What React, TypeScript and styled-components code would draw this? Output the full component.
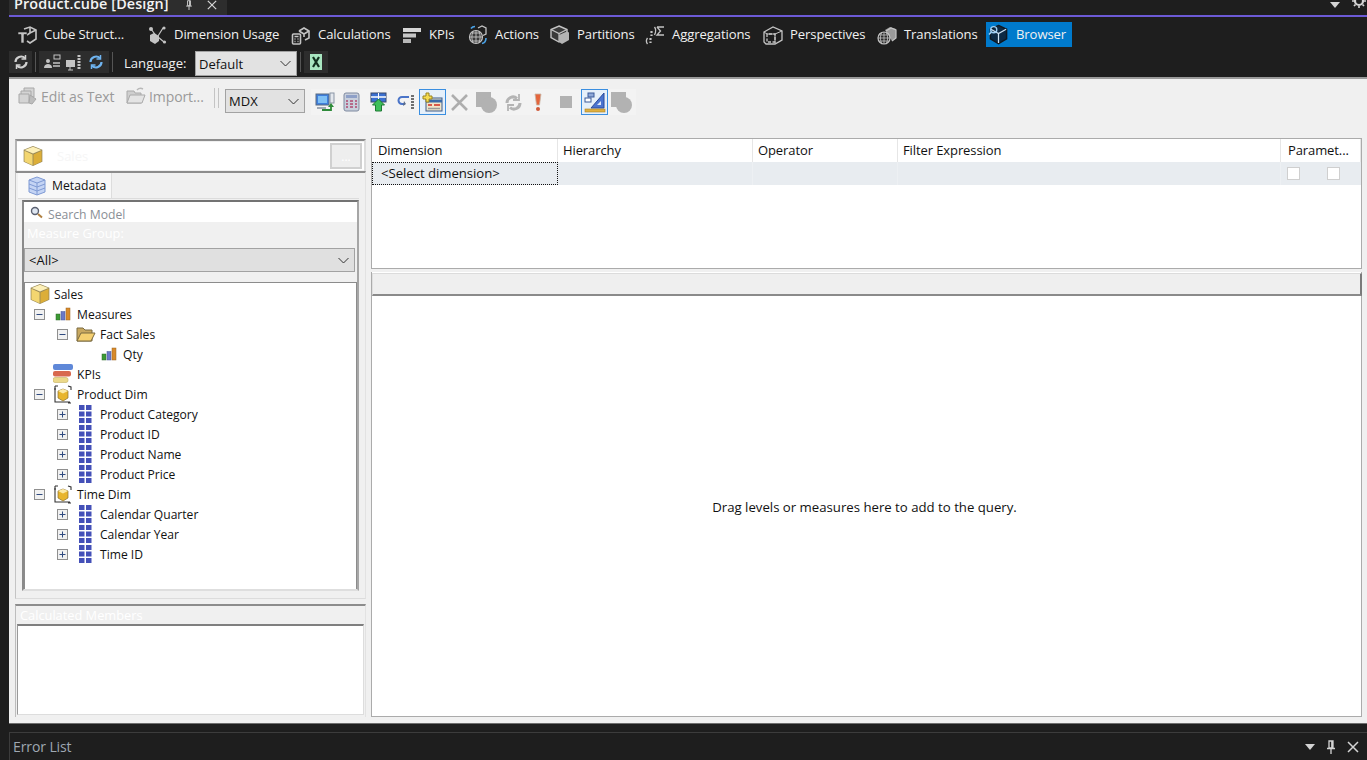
import React from "react";
import styled, { createGlobalStyle } from "styled-components";

const Global = createGlobalStyle`
  html, body { margin: 0; padding: 0; background: #1e1e1e; overflow: hidden; }
  #root { width: 1367px; height: 760px; }
  * { box-sizing: border-box; }
`;
const FONT = `"Open Sans", "Noto Sans", sans-serif`;

const Page = styled.div`
  width: 1367px; height: 760px; overflow: hidden; background: #1e1e1e; color: #fff;
  display: flex; flex-direction: column; font-family: ${FONT}; font-size: 13px;
`;
const TopBar = styled.div`
  height: 15px; flex: none; display: flex; justify-content: space-between; padding-left: 9px; overflow: hidden;
`;
const DocTab = styled.div`
  width: 218px; height: 15px; background: #2d2d2d; display: flex; align-items: flex-start; padding-left: 5px; gap: 13px;
`;
const DocTitle = styled.span`
  font-size: 14.4px; font-weight: 600; line-height: 14px; margin-top: -3px; width: 157px; white-space: nowrap; letter-spacing: .1px; color: #f4f4f4;
`;
const TopIcons = styled.div`
  display: flex; align-items: flex-start; gap: 12px; padding: 2px 1px 0 0;
`;
const AccentLine = styled.div`
  height: 2px; flex: none; margin-left: 9px; background: #6c5ad6;
`;
const DesignerTabs = styled.div`
  height: 34px; flex: none; display: flex; align-items: flex-start; padding: 5px 0 0 15px;
`;
const DesignerTab = styled.div<{ $w: number; $active?: boolean }>`
  width: ${p => p.$w}px; flex: none; height: 25px; display: flex; align-items: center; padding-left: 2px; gap: 7px;
  background: ${p => (p.$active ? "#007acc" : "transparent")}; font-size: 13.1px; white-space: nowrap; letter-spacing: -.1px; color: #f1f1f1;
  span { position: relative; top: -1px; }
`;
const ToolRow = styled.div`
  height: 26px; flex: none; display: flex; align-items: flex-start; padding-left: 9px; gap: 3px;
`;
const DarkGroup = styled.div<{ $w: number }>`
  height: 22px; background: #2d2d2d; display: flex; align-items: center; justify-content: space-around; padding: 0 2px; flex: none;
  width: ${p => p.$w}px;
`;
const DarkSep = styled.div`
  width: 1px; height: 20px; margin-top: 1px; background: #555; flex: none;
`;
const LangLabel = styled.span`
  font-size: 13.1px; margin-left: 8px; width: 68px; flex: none; line-height: 24px; color: #f1f1f1;
`;
const ComboBox = styled.div<{ $w: number; $h: number; $bg?: string }>`
  width: ${p => p.$w}px; height: ${p => p.$h}px; flex: none; display: flex; align-items: center; justify-content: space-between;
  background: ${p => p.$bg || "#e2e2e2"}; border: 1px solid #a2a2a2; color: #111; padding: 0 5px 0 3px; font-size: 13px;
`;
const QueryCombo = styled(ComboBox)`
  margin: 3px 0 0 3px;
`;
const MeasureCombo = styled(ComboBox)`
  padding-left: 4px;
`;
const Designer = styled.div`
  height: 647px; flex: none; margin-left: 9px; background: #f0f0f0; border-top: 2px solid #9a9a9a; border-bottom: 1px solid #6e6e6e;
  display: flex; flex-direction: column;
`;
const QueryBar = styled.div`
  height: 59px; flex: none; display: flex; align-items: flex-start; padding: 7px 0 0 9px; color: #9a9a9a; font-size: 14px;
`;
const QueryButton = styled.div<{ $w: number }>`
  width: ${p => p.$w}px; height: 20px; display: flex; align-items: center; gap: 3px; flex: none; white-space: nowrap; letter-spacing: -.1px;
`;
const GripLine = styled.div`
  width: 1px; height: 20px; margin: 2px 3px 0 0; background: #c4c4c4; flex: none;
`;
const IconStrip = styled.div`
  margin: 3px 0 0 6px; height: 26px; width: 325px; flex: none; display: flex; align-items: center; background: #f3f3f3;
`;
const StripSlot = styled.div<{ $w: number; $on?: boolean }>`
  width: ${p => p.$w}px; height: 26px; flex: none; display: flex; align-items: center; justify-content: center;
  border: ${p => (p.$on ? "1px solid #3a8ee0" : "none")}; background: ${p => (p.$on ? "#e6f0fa" : "transparent")};
`;
const Split = styled.div`
  flex: 1; display: grid; grid-template-columns: 351px 991px; column-gap: 5px; padding: 0 5px 6px 6px; min-height: 0;
`;
const LeftCol = styled.div`
  display: flex; flex-direction: column; gap: 5px;
`;
const LeftTop = styled.div`
  display: flex; flex-direction: column; flex: none;
`;
const RightCol = styled.div`
  display: flex; flex-direction: column; gap: 3px;
`;
const CubeBar = styled.div`
  margin-top: 1px; height: 32px; flex: none; border-top: 2px solid #8c8c8c; border-left: 2px solid #b4b4b4; border-right: 2px solid #dcdcdc; padding-bottom: 2px;
`;
const CubeField = styled.div`
  height: 28px; margin-top: 1px; background: #fff; display: flex; align-items: center; padding: 0 2px 0 5px;
`;
const CubeName = styled.span`
  color: #f6f6f6; margin-left: 13px; flex: 1; font-size: 13px;
`;
const DotsButton = styled.div`
  width: 32px; height: 26px; background: #eeeeee; border: 2px solid #d0d0d0; color: #fff; text-align: center; line-height: 24px; font-size: 12px;
`;
const MetaPanel = styled.div`
  height: 428px; flex: none; border-top: 2px solid #8c8c8c; border-left: 1px solid #c4c4c4; border-right: 1px solid #e2e2e2; border-bottom: 1px solid #dcdcdc;
  display: flex; flex-direction: column; padding: 0 6px 0 2px;
`;
const MetaTab = styled.div`
  width: 94px; height: 25px; flex: none; background: #f8f8f8; border-right: 1px solid #ddd; display: flex; align-items: center; gap: 5px; padding-left: 9px; color: #111; font-size: 12.2px;
`;
const MetaRule = styled.div`
  height: 1px; flex: none; background: #dcdcdc;
`;
const MetaBody = styled.div`
  margin: 1px 0 0 4px; height: 391px; flex: none; border-top: 2px solid #737373; border-left: 2px solid #8a8a8a; border-right: 2px solid #a6a6a6; border-bottom: 2px solid #dedede;
  display: flex; flex-direction: column;
`;
const SearchRow = styled.div`
  height: 20px; flex: none; background: #fff; display: flex; align-items: center; padding: 0 0 0 6px; gap: 5px; color: #8a8f96; font-size: 12.2px;
  span { position: relative; top: 2px; }
`;
const GhostLabel = styled.div`
  color: #fff; font-size: 12.8px; line-height: 22px; white-space: nowrap; overflow: hidden;
`;
const GroupLabel = styled(GhostLabel)`
  height: 26px; padding: 0 0 0 3px; flex: none;
`;
const Tree = styled.div`
  margin-top: 10px; flex: 1; background: #fff; border: 1px solid #8c8c8c; border-bottom: none; padding-top: 1px; min-height: 0; color: #111;
`;
const TreeRow = styled.div<{ $level: number }>`
  height: 20px; display: flex; align-items: center; font-size: 12.1px; padding-left: ${p => (p.$level === 0 ? 4 : 9 + 23 * (p.$level - 1))}px;
`;
const ExpanderSlot = styled.div`
  width: 18px; flex: none; display: flex; align-items: center;
`;
const TreeIconSlot = styled.div`
  width: 21px; flex: none; display: flex; align-items: center; justify-content: center; margin-right: 4px;
`;
const CalcPanel = styled.div`
  flex: 1; border-top: 2px solid #8c8c8c; border-left: 1px solid #bdbdbd; border-right: 1px solid #e2e2e2; display: flex; flex-direction: column; padding: 0 1px 2px 1px;
`;
const CalcLabel = styled(GhostLabel)`
  height: 18px; flex: none; padding-left: 3px; line-height: 18px;
`;
const CalcBox = styled.div`
  flex: 1; background: #fff; border-top: 2px solid #7f7f7f; border-left: 1px solid #9a9a9a; border-right: 1px solid #ddd; border-bottom: 1px solid #ddd;
`;
const FilterPanel = styled.div`
  height: 131px; flex: none; background: #fff; border: 1px solid #ababab;
`;
const FilterGrid = styled.div`
  display: grid; grid-template-columns: 186px 195px 145px 383px 80px; grid-template-rows: 23px 23px;
`;
const HeadCell = styled.div<{ $pad?: number }>`
  border-right: 1px solid #e6e6e6; padding-left: ${p => p.$pad ?? 5}px; line-height: 22px; color: #111; font-size: 13px; white-space: nowrap; letter-spacing: -.1px;
`;
const RowCell = styled.div`
  background: #e8ecf0; border-right: 1px solid #edf0f3;
`;
const SelectedCell = styled.div`
  background: #e8ecf0; border: 1px dotted #111; padding-left: 8px; line-height: 21px; color: #111; font-size: 13.2px; white-space: nowrap; letter-spacing: -.05px;
`;
const CheckCell = styled(RowCell)`
  display: flex; align-items: center; padding-left: 6px; gap: 27px; border-right: none;
`;
const TinyCheck = styled.div`
  width: 13px; height: 13px; background: #fff; border: 1px solid #cfcfcf;
`;
const ResultPanel = styled.div`
  height: 445px; flex: none; background: #fff; border: 1px solid #ababab; border-top: none; display: flex; flex-direction: column;
`;
const ResultHeader = styled.div`
  margin: 1px -1px 0 0; height: 23px; flex: none; background: #efefef; border-top: 1px solid #dcdcdc; border-left: 1px solid #e0e0e0; border-right: 2px solid #7a7a7a; border-bottom: 2px solid #8a8a8a;
`;
const ResultBody = styled.div`
  flex: 1; display: flex; align-items: center; justify-content: center; color: #111; font-size: 13.2px; padding: 1px 4px 0 0;
`;
const ErrorBar = styled.div`
  margin: 8px 0 0 9px; height: 28px; flex: none; border-top: 1px solid #3c3c3c; border-left: 1px solid #3c3c3c; display: flex; align-items: center; justify-content: space-between; padding: 0 8px 0 3px;
`;
const ErrorTitle = styled.span`
  color: #9fa8b2; font-size: 14px; letter-spacing: -.1px;
`;
const ErrorIcons = styled.div`
  display: flex; align-items: center; gap: 11px; padding-top: 1px;
`;

/* ---------- icons ---------- */
const Svg = styled.svg`
  flex: none; display: block;
`;
const LiftedSvg = styled(Svg)`
  margin-top: -2px;
`;
const GearSvg = styled(Svg)`
  margin-top: -8px;
`;
const G = "#c4c4c4";
const Dk: React.FC<{ children: React.ReactNode }> = ({ children }) => (
  <Svg width={20} height={20} viewBox="0 0 20 20" fill="none" stroke={G} strokeWidth="1.6">{children}</Svg>
);
const CubeStructIcon = () => (
  <Dk>
    <path d="M7 4l6-2 6 3v9l-6 4-3-2" />
    <path d="M13 2v6l6-3M13 8l-3 2" />
    <path d="M1 7h9v2.5H7V18H4V9.5H1z" fill={G} stroke="#1e1e1e" strokeWidth=".6" />
  </Dk>
);
const DimUsageIcon = () => (
  <Dk>
    <path d="M4 4l6 8M16 3l-5 8M11 12l6 5" strokeWidth="1.2" />
    <circle cx="4" cy="4" r="2" fill={G} stroke="none" />
    <circle cx="17" cy="3" r="1.6" fill={G} stroke="none" />
    <circle cx="17.5" cy="17" r="1.6" fill={G} stroke="none" />
    <path d="M3 10l4-2 5 3v5l-4 3-5-3z" fill={G} stroke="none" />
  </Dk>
);
const CalcIcon = () => (
  <Dk>
    <path d="M8 6l5-3 5 3v7l-4 2" />
    <path d="M8 6l5 3 5-3M13 9v3" />
    <rect x="1.5" y="9" width="8" height="10" rx="1" />
    <path d="M3.5 11.5h4M3.5 14h1M6.5 14h1M3.5 16.5h1M6.5 16.5h1" />
  </Dk>
);
const KpiIcon = () => (
  <Svg width={20} height={20} viewBox="0 0 20 20">
    <rect x="1" y="3" width="18" height="4" fill="#d6d6d6" />
    <rect x="1" y="8.5" width="13" height="4" fill="#c6c6c6" />
    <rect x="1" y="14" width="8" height="4" fill="#b8b8b8" />
  </Svg>
);
const ActionsIcon = () => (
  <Dk>
    <circle cx="8" cy="12" r="6.5" fill="#3a3a3a" strokeWidth="1.2" />
    <path d="M2 12h12M8 5.5v13M4 8h8M4 16h8M5 6.5c-1.5 3.5-1.5 8 0 11M11 6.5c1.5 3.5 1.5 8 0 11" strokeWidth=".9" />
    <path d="M10 3l4-2 4 2v6l-3 1.5" strokeWidth="1.3" />
    <path d="M3 3.5c1-1.5 2-2 4-2" stroke="#4aa3e8" />
    <path d="M18 13c0 3-1 5-4 5.5" stroke="#4aa3e8" />
  </Dk>
);
const PartitionIcon = () => (
  <Svg width={20} height={20} viewBox="0 0 20 20">
    <path d="M9 1l8 3.5v8L9 17l-8-4.5v-8z" fill="#3a3a3a" stroke={G} strokeWidth="1.4" />
    <path d="M1 4.5l8 4 8-4M9 8.5V17" stroke={G} strokeWidth="1.2" fill="none" />
    <path d="M9 10l8-3.5 2 1V15l-7 4-3-2z" fill="#b4b4b4" />
  </Svg>
);
const AggIcon = () => (
  <Dk>
    <path d="M12 2h7M12 2l3.500 4L12 10h7" strokeWidth="1.3" />
    <path d="M9.500 2c1.500 2 1.500 5 0 8" strokeWidth="1.3" />
    <path d="M2.500 19c-1.500-2-1.500-4 0-6" strokeWidth="1.3" />
    <path d="M6.500 6v5M5.500 13v5" strokeWidth="2.200" strokeDasharray="2 1.500" />
  </Dk>
);
const PerspectiveIcon = () => (
  <Dk>
    <path d="M1 7l9-5 9 4v9l-7 4H3l-2-2z" strokeWidth="1.3" />
    <path d="M4 9v8h8V9z" strokeWidth="1.3" strokeDasharray="3 1.5" />
    <path d="M1 7l3 2h8l7-3M12 9v9" strokeWidth="1" />
  </Dk>
);
const TranslationIcon = () => (
  <Dk>
    <path d="M8 5l5-3 6 2v9l-4 3" fill="#9a9a9a" stroke="none" />
    <path d="M9 6l5-3 5 2v8l-4 3" strokeWidth="1.2" />
    <circle cx="7" cy="13" r="6" fill="#2a2a2a" strokeWidth="1.2" />
    <path d="M1 13h12M7 7v12M2.5 10h9M2.5 16h9M4.5 8c-1.5 3-1.5 7 0 10M9.500 8c1.500 3 1.500 7 0 10" strokeWidth=".8" />
  </Dk>
);
const BrowserIcon = () => (
  <Svg width={21} height={21} viewBox="0 0 22 22" fill="none">
    <path d="M11 1.500l8.500 4v10L11 20.500l-8.500-5v-10z" fill="#0d2a44" stroke="#101820" strokeWidth="1.5" />
    <path d="M3 5.500l8 4.500 8-4.500M11 10v10" stroke="#cfe4f5" strokeWidth="1.3" />
    <circle cx="6" cy="6" r="3.200" stroke="#9fd0f5" strokeWidth="1.4" />
    <path d="M3.500 8.500L1 11" stroke="#9fd0f5" strokeWidth="1.6" />
  </Svg>
);
const RefreshIcon = ({ c = "#d0d0d0" }: { c?: string }) => (
  <Svg width={16} height={16} viewBox="0 0 16 16" fill="none" stroke={c} strokeWidth="2.2">
    <path d="M2.500 8a5.500 5.500 0 0 1 9.500-3.700M13.500 8A5.500 5.500 0 0 1 4 11.700" />
    <path d="M12.500 1v4h-4M3.500 15v-4h4" strokeWidth="1.5" />
  </Svg>
);
const UsersIcon = () => (
  <Svg width={17} height={16} viewBox="0 0 17 16">
    <circle cx="4" cy="7" r="2" fill={G} /><path d="M0 14c0-3 2-4 4-4s4 1 4 4z" fill={G} />
    <rect x="10" y="1" width="6" height="4" fill="none" stroke={G} />
    <path d="M9 9h7M9 12h7" stroke={G} strokeWidth="1.5" />
  </Svg>
);
const BoxListIcon = () => (
  <Svg width={17} height={17} viewBox="0 0 17 17">
    <rect x="0" y="6" width="9" height="7" fill={G} /><path d="M4 13v3M2 16h5" stroke={G} />
    <path d="M13 1v14" stroke={G} strokeWidth="3" strokeDasharray="2 1" />
  </Svg>
);
const ExcelIcon = () => (
  <Svg width={14} height={20} viewBox="0 0 14 20">
    <rect x="1" y="2" width="12" height="16" fill="#a8e6c0" />
    <path d="M4 5l6 10M10 5L4 15" stroke="#12301f" strokeWidth="2.2" />
  </Svg>
);
const Triangle = () => (
  <Svg width={10} height={6} viewBox="0 0 10 6"><path d="M0 0h10L5 6z" fill="#d4d4d4" /></Svg>
);
const PinIcon = ({ h = 14 }: { h?: number }) => (
  <Svg width={10} height={h} viewBox="0 0 10 14" fill="none" stroke="#d4d4d4" strokeWidth="1.3">
    <path d="M3 1h4v7H3zM5.800 1v7M1 8.500h8M5 9v5" />
  </Svg>
);
const CloseIcon = ({ s = 12 }: { s?: number }) => (
  <Svg width={s} height={s} viewBox="0 0 12 12" stroke="#d4d4d4" strokeWidth="1.5"><path d="M1 1l10 10M11 1L1 11" /></Svg>
);
const GearIcon = () => (
  <GearSvg width={14} height={14} viewBox="0 0 14 14">
    <circle cx="7" cy="7" r="4" fill="none" stroke="#d4d4d4" strokeWidth="2.2" />
    <path d="M7 0v14M0 7h14M2 2l10 10M12 2L2 12" stroke="#d4d4d4" strokeWidth="1.6" strokeDasharray="2 10 2 0" />
  </GearSvg>
);
const Chevron = () => (
  <Svg width={11} height={7} viewBox="0 0 11 7" fill="none" stroke="#333" strokeWidth="1"><path d="M.5 1l5 5 5-5" /></Svg>
);
const EditTextIcon = () => (
  <Svg width={20} height={20} viewBox="0 0 20 20" fill="#d4d4d4" stroke="#a8a8a8">
    <path d="M6 2h10v9H6z" /><path d="M3 5h10v9H3z" /><path d="M1 8h10v9H1z" />
    <path d="M12 9l6 4-4 5-3-1z" fill="#bdbdbd" />
  </Svg>
);
const OpenFolderIcon = () => (
  <Svg width={21} height={20} viewBox="0 0 21 20">
    <path d="M2 5h7l1 2h6v10H2z" fill="#cfcfcf" stroke="#aaa" />
    <path d="M2 17l3-8h15l-3 8z" fill="#e4e4e4" stroke="#aaa" />
    <path d="M12 4c2-2 4-2 6-1" stroke="#b8b8b8" strokeWidth="1.5" fill="none" />
  </Svg>
);
const ServerIcon = () => (
  <Svg width={20} height={21} viewBox="0 0 20 21">
    <rect x="1" y="2" width="13" height="11" fill="#3f7fdc" stroke="#5a6b80" />
    <rect x="3" y="4" width="9" height="7" fill="#7fc0f5" />
    <rect x="15" y="1" width="4" height="10" fill="#e4e8ee" stroke="#8a95a5" />
    <path d="M2 15h9v2H2z" fill="#a0a8b4" />
    <path d="M7 18h9v-4" stroke="#2e8b3a" strokeWidth="1.8" fill="none" />
    <path d="M13 15l3-4 3 4z" fill="#2e8b3a" />
  </Svg>
);
const CalculatorIcon = () => (
  <Svg width={17} height={20} viewBox="0 0 17 20">
    <rect x="1" y="1" width="15" height="18" rx="2" fill="#c8cfdc" stroke="#7f8aa0" />
    <rect x="3" y="3" width="11" height="3" fill="#8ea0c8" />
    <path d="M3 9h2M7 9h3M12 9h2M3 12h2M7 12h3M12 12h2M3 15h2M7 15h3M12 15h2" stroke="#b04a70" strokeWidth="1.5" />
  </Svg>
);
const UploadGridIcon = () => (
  <Svg width={17} height={20} viewBox="0 0 17 20">
    <rect x="1" y="1" width="15" height="9" fill="#3a6fd0" stroke="#3b4a6b" />
    <path d="M1 5h15" stroke="#fff" strokeWidth="1.5" /><path d="M8.500 1v9" stroke="#fff" />
    <path d="M8.500 7l6 6h-3v6h-6v-6h-3z" fill="#3ebf5a" stroke="#1e7a34" />
  </Svg>
);
const ReconnectIcon = () => (
  <Svg width={18} height={16} viewBox="0 0 18 16" fill="none">
    <path d="M12 3H5a3 3 0 0 0 0 7h3" stroke="#4a74c8" strokeWidth="2" />
    <path d="M7 7l2 3-3 2z" fill="#5a6b8a" />
    <path d="M14 2h3M14 5h3M14 8h3M14 11h3M14 14h3" stroke="#444" strokeWidth="1.4" />
  </Svg>
);
const AddCalcIcon = () => (
  <Svg width={21} height={20} viewBox="0 0 21 20">
    <rect x="4" y="6" width="16" height="13" fill="#f0e4c8" stroke="#3a5a8a" />
    <path d="M4 9h16" stroke="#3a6aa8" strokeWidth="3" />
    <path d="M6 13h4M12 13h6" stroke="#d85a4a" strokeWidth="2" /><path d="M6 16.500h12" stroke="#999" strokeWidth="1.5" />
    <path d="M4 1h3v3h3v3H7v3H4V7H1V4h3z" fill="#f5dc50" stroke="#9a8420" />
  </Svg>
);
const GrayX = () => (
  <Svg width={19} height={19} viewBox="0 0 19 19" stroke="#adadad" strokeWidth="2.6"><path d="M2 2l15 15M17 2L2 17" /></Svg>
);
const GrayBlob = () => (
  <Svg width={21} height={21} viewBox="0 0 21 21" fill="#b2b2b2">
    <rect x="0" y="0" width="15" height="15" /><circle cx="13" cy="13" r="8" />
  </Svg>
);
const GrayRecycle = () => (
  <Svg width={19} height={19} viewBox="0 0 19 19" fill="none" stroke="#b4b4b4" strokeWidth="3">
    <path d="M3 10a6 6 0 0 1 10-4.500M16 10a6 6 0 0 1-10 4.500" /><path d="M15 1v6H9M4 18v-6h6" strokeWidth="1.8" />
  </Svg>
);
const Exclaim = () => (
  <Svg width={10} height={19} viewBox="0 0 10 19">
    <path d="M2 1h6L6.500 12h-3z" fill="#e4653c" stroke="#c8b8a8" strokeWidth=".8" /><circle cx="5" cy="16" r="2" fill="#d05a3a" />
  </Svg>
);
const GraySquare = () => <Svg width={12} height={12}><rect width="12" height="12" fill="#b2b2b2" /></Svg>;
const DesignIcon = () => (
  <Svg width={22} height={22} viewBox="0 0 22 22">
    <rect x="4" y="2" width="6" height="4" fill="#8ea8d8" stroke="#3a5a9a" />
    <rect x="1" y="7" width="6" height="4" fill="#fff" stroke="#3a5a9a" />
    <path d="M20 2v15H7z" fill="#4a74d0" stroke="#2a4a9a" />
    <path d="M17 10v4h-4z" fill="#dfe8f8" />
    <rect x="1" y="18" width="20" height="3" fill="#e0b040" stroke="#a88020" strokeWidth=".6" />
  </Svg>
);
const YellowCube = () => (
  <Svg width={22} height={22} viewBox="0 0 20 20">
    <path d="M10 0.800l8.500 3.500v11L10 19.200 1.500 15.300v-11z" fill="#9a8a58" />
    <path d="M10 1.600l7.600 3L10 7.800 2.400 4.600z" fill="#fdf0b8" />
    <path d="M2.200 5.300L9.600 8.600v9.800L2.200 15z" fill="#f3d670" />
    <path d="M17.800 5.300L10.400 8.600v9.800L17.800 15z" fill="#dcae38" />
  </Svg>
);
const MetaCube = () => (
  <Svg width={20} height={20} viewBox="0 0 20 20">
    <path d="M10 1l8 3v12l-8 3-8-3V4z" fill="#c4d4f4" stroke="#7f9ad4" />
    <path d="M2 4l8 3 8-3M2 8l8 3 8-3M2 12l8 3 8-3M10 7v12" stroke="#7f9ad4" fill="none" />
  </Svg>
);
const Magnifier = () => (
  <Svg width={13} height={13} viewBox="0 0 13 13" fill="none">
    <circle cx="5" cy="5" r="3.500" fill="#dfe7f2" stroke="#5a6070" strokeWidth="1.4" />
    <path d="M8 8l4 3.500" stroke="#b08040" strokeWidth="2" />
  </Svg>
);
const BarsIcon = () => (
  <Svg width={16} height={14} viewBox="0 0 16 14">
    <rect x="1" y="7" width="4" height="6" fill="#3c9a34" stroke="#2d6a28" strokeWidth=".5" />
    <rect x="6" y="4.500" width="4" height="8.500" fill="#6a78c8" stroke="#4a5a98" strokeWidth=".5" />
    <rect x="11" y="1" width="4" height="12" fill="#d88a2a" stroke="#9a6420" strokeWidth=".5" />
  </Svg>
);
const FolderIcon = () => (
  <Svg width={20} height={15} viewBox="0 0 20 15">
    <path d="M1 1h6l2 2h7v11H1z" fill="#c8a860" stroke="#7a6a40" />
    <path d="M1 14l4-8h14l-4 8z" fill="#f5d070" stroke="#7a6a40" />
  </Svg>
);
const KpiStackIcon = () => (
  <LiftedSvg width={20} height={19} viewBox="0 0 20 19">
    <rect x="0" y="0" width="20" height="6" rx="2" fill="#5f88d8" />
    <rect x="0" y="7" width="18" height="5.500" rx="2" fill="#d8694f" />
    <rect x="0" y="13.500" width="15" height="5" rx="2" fill="#ecd98a" stroke="#c4b060" strokeWidth=".6" />
  </LiftedSvg>
);
const DimIcon = () => (
  <Svg width={19} height={19} viewBox="0 0 19 19" fill="none">
    <path d="M2 1v16h15M1 4h2M2 1l3 0M15 1l3 1v3M15 18h3" stroke="#333" strokeWidth="1.1" />
    <path d="M10 4l5 2v7l-5 3-5-3V6z" fill="#e8b52c" stroke="#8a7030" strokeWidth=".7" />
    <path d="M10 4l5 2-5 2.500L5 6z" fill="#fbe9a6" />
  </Svg>
);
const HierIcon = () => (
  <Svg width={13} height={18} viewBox="0 0 13 18" fill="#4450b8">
    {[0, 6.5, 13].map(y => (
      <g key={y}><rect x="0" y={y} width="5.500" height="5" /><rect x="7" y={y} width="5.500" height="5" /></g>
    ))}
  </Svg>
);
const Expander = ({ open }: { open: boolean }) => (
  <Svg width={11} height={11} viewBox="0 0 11 11">
    <rect x=".5" y=".5" width="10" height="10" fill="#f1f1f1" stroke="#8f8f8f" />
    <path d={open ? "M2.500 5.500h6" : "M2.500 5.500h6M5.500 2.500v6"} stroke="#2f4a80" />
  </Svg>
);

/* ---------- data ---------- */
const tabs = [
  { w: 130, label: "Cube Struct...", icon: <CubeStructIcon /> },
  { w: 144, label: "Dimension Usage", icon: <DimUsageIcon /> },
  { w: 111, label: "Calculations", icon: <CalcIcon /> },
  { w: 66, label: "KPIs", icon: <KpiIcon /> },
  { w: 82, label: "Actions", icon: <ActionsIcon /> },
  { w: 95, label: "Partitions", icon: <PartitionIcon /> },
  { w: 118, label: "Aggregations", icon: <AggIcon /> },
  { w: 114, label: "Perspectives", icon: <PerspectiveIcon /> },
  { w: 111, label: "Translations", icon: <TranslationIcon /> },
];

const tree: { level: number; open?: boolean; icon: React.ReactNode; label: string }[] = [
  { level: 0, icon: <YellowCube />, label: "Sales" },
  { level: 1, open: true, icon: <BarsIcon />, label: "Measures" },
  { level: 2, open: true, icon: <FolderIcon />, label: "Fact Sales" },
  { level: 3, icon: <BarsIcon />, label: "Qty" },
  { level: 1, icon: <KpiStackIcon />, label: "KPIs" },
  { level: 1, open: true, icon: <DimIcon />, label: "Product Dim" },
  { level: 2, open: false, icon: <HierIcon />, label: "Product Category" },
  { level: 2, open: false, icon: <HierIcon />, label: "Product ID" },
  { level: 2, open: false, icon: <HierIcon />, label: "Product Name" },
  { level: 2, open: false, icon: <HierIcon />, label: "Product Price" },
  { level: 1, open: true, icon: <DimIcon />, label: "Time Dim" },
  { level: 2, open: false, icon: <HierIcon />, label: "Calendar Quarter" },
  { level: 2, open: false, icon: <HierIcon />, label: "Calendar Year" },
  { level: 2, open: false, icon: <HierIcon />, label: "Time ID" },
];

const strip: { w: number; on?: boolean; icon: React.ReactNode }[] = [
  { w: 28, icon: <ServerIcon /> },
  { w: 25, icon: <CalculatorIcon /> },
  { w: 28, icon: <UploadGridIcon /> },
  { w: 27, icon: <ReconnectIcon /> },
  { w: 27, on: true, icon: <AddCalcIcon /> },
  { w: 26, icon: <GrayX /> },
  { w: 29, icon: <GrayBlob /> },
  { w: 25, icon: <GrayRecycle /> },
  { w: 24, icon: <Exclaim /> },
  { w: 31, icon: <GraySquare /> },
  { w: 27, on: true, icon: <DesignIcon /> },
  { w: 27, icon: <GrayBlob /> },
];

export default function App() {
  return (
    <Page>
      <Global />
      <TopBar>
        <DocTab>
          <DocTitle>Product.cube [Design]</DocTitle>
          <PinIcon h={10} />
          <CloseIcon s={10} />
        </DocTab>
        <TopIcons>
          <Triangle />
          <GearIcon />
        </TopIcons>
      </TopBar>
      <AccentLine />
      <DesignerTabs>
        {tabs.map(t => (
          <DesignerTab key={t.label} $w={t.w}>{t.icon}<span>{t.label}</span></DesignerTab>
        ))}
        <DesignerTab $w={86} $active><BrowserIcon /><span>Browser</span></DesignerTab>
      </DesignerTabs>
      <ToolRow>
        <DarkGroup $w={23}><RefreshIcon /></DarkGroup>
        <DarkSep />
        <DarkGroup $w={70}><UsersIcon /><BoxListIcon /><RefreshIcon c="#6fb4f0" /></DarkGroup>
        <DarkSep />
        <LangLabel>Language:</LangLabel>
        <ComboBox $w={102} $h={25}>Default<Chevron /></ComboBox>
        <DarkSep />
        <DarkGroup $w={24}><ExcelIcon /></DarkGroup>
      </ToolRow>
      <Designer>
        <QueryBar>
          <QueryButton $w={107}><EditTextIcon />Edit as Text</QueryButton>
          <QueryButton $w={89}><OpenFolderIcon />Import...</QueryButton>
          <GripLine /><GripLine />
          <QueryCombo $w={80} $h={24}>MDX<Chevron /></QueryCombo>
          <IconStrip>
            {strip.map((s, i) => (
              <StripSlot key={i} $w={s.w} $on={s.on}>{s.icon}</StripSlot>
            ))}
          </IconStrip>
        </QueryBar>
        <Split>
          <LeftCol>
            <LeftTop>
              <CubeBar>
                <CubeField>
                  <YellowCube />
                  <CubeName>Sales</CubeName>
                  <DotsButton>...</DotsButton>
                </CubeField>
              </CubeBar>
              <MetaPanel>
                <MetaTab><MetaCube />Metadata</MetaTab>
                <MetaRule />
                <MetaBody>
                  <SearchRow><Magnifier /><span>Search Model</span></SearchRow>
                  <GroupLabel>Measure Group:</GroupLabel>
                  <MeasureCombo $w={331} $h={24} $bg="#e0e0e0">&lt;All&gt;<Chevron /></MeasureCombo>
                  <Tree>
                    {tree.map(n => (
                      <TreeRow key={n.label + n.level} $level={n.level}>
                        {n.level > 0 && (
                          <ExpanderSlot>{n.open !== undefined && <Expander open={n.open} />}</ExpanderSlot>
                        )}
                        <TreeIconSlot>{n.icon}</TreeIconSlot>
                        <span>{n.label}</span>
                      </TreeRow>
                    ))}
                  </Tree>
                </MetaBody>
              </MetaPanel>
            </LeftTop>
            <CalcPanel>
              <CalcLabel>Calculated Members</CalcLabel>
              <CalcBox />
            </CalcPanel>
          </LeftCol>
          <RightCol>
            <FilterPanel>
              <FilterGrid>
                <HeadCell $pad={6}>Dimension</HeadCell>
                <HeadCell>Hierarchy</HeadCell>
                <HeadCell>Operator</HeadCell>
                <HeadCell>Filter Expression</HeadCell>
                <HeadCell $pad={7}>Paramet...</HeadCell>
                <SelectedCell>&lt;Select dimension&gt;</SelectedCell>
                <RowCell />
                <RowCell />
                <RowCell />
                <CheckCell><TinyCheck /><TinyCheck /></CheckCell>
              </FilterGrid>
            </FilterPanel>
            <ResultPanel>
              <ResultHeader />
              <ResultBody>Drag levels or measures here to add to the query.</ResultBody>
            </ResultPanel>
          </RightCol>
        </Split>
      </Designer>
      <ErrorBar>
        <ErrorTitle>Error List</ErrorTitle>
        <ErrorIcons>
          <Triangle />
          <PinIcon />
          <CloseIcon />
        </ErrorIcons>
      </ErrorBar>
    </Page>
  );
}
